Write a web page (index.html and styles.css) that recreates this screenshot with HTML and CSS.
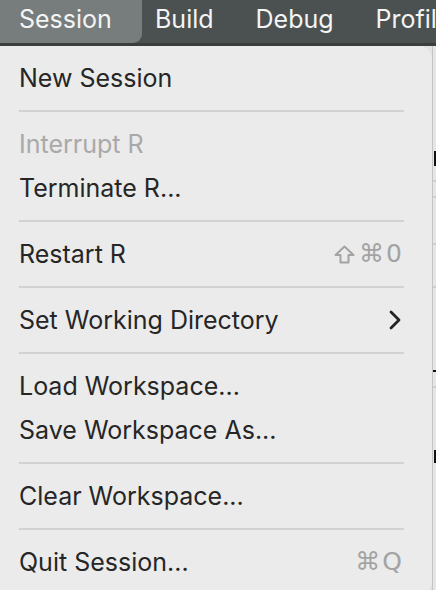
FILE: index.html
```html
<!DOCTYPE html>
<html lang="en">
<head>
  <meta charset="UTF-8">
  <meta name="viewport" content="width=device-width, initial-scale=1.0">
  <title>Session menu</title>
  <link rel="stylesheet" href="styles.css">
</head>
<body>

  <div class="menubar">
    <span class="title open">Session</span>
    <span class="title">Build</span>
    <span class="title">Debug</span>
    <span class="title">Profile</span>
  </div>

  <div class="screen">
    <div class="menu">
      <div class="item">New Session</div>
      <div class="sep"></div>
      <div class="item disabled">Interrupt R</div>
      <div class="item">Terminate R...</div>
      <div class="sep"></div>
      <div class="item">Restart R
        <span class="keys">
          <svg class="shift" width="21" height="19" viewBox="0 0 21 19"><polygon points="10.5,1.5 19.5,10 14.5,10 14.5,17.5 6.5,17.5 6.5,10 1.5,10" fill="none" stroke="#a3a3a3" stroke-width="2" stroke-linejoin="round"/></svg>⌘0
        </span>
      </div>
      <div class="sep"></div>
      <div class="item">Set Working Directory
        <svg class="chevron" width="12" height="20" viewBox="0 0 12 20"><polyline points="2,2 10,10 2,18" fill="none" stroke="#222" stroke-width="2.8" stroke-linecap="round" stroke-linejoin="round"/></svg>
      </div>
      <div class="sep"></div>
      <div class="item">Load Workspace...</div>
      <div class="item">Save Workspace As...</div>
      <div class="sep"></div>
      <div class="item">Clear Workspace...</div>
      <div class="sep"></div>
      <div class="item">Quit Session... <span class="keys">⌘Q</span></div>
    </div>

    <div class="behind">
      <div class="row r1"><span class="mark"></span></div>
      <div class="row r2"></div>
      <div class="row r3"></div>
      <div class="row r4"></div>
      <div class="row r5"><span class="mark cross"></span></div>
      <div class="row r6"><span class="mark"></span></div>
    </div>
  </div>

</body>
</html>
```

FILE: styles.css
```css
* {
  box-sizing: border-box;
}

body {
  margin: 0;
  width: 436px;
  height: 590px;
  overflow: hidden;
  font-family: Inter, "Noto Sans", sans-serif;
  background-color: #e2e2e2;
}

.menubar {
  height: 46px;
  display: flex;
  background-color: #4b5150;
  border-bottom: 3px solid #3a3e3d;
  color: #f4f4f4;
  font-size: 25px;
  white-space: nowrap;
  overflow: hidden;
}

.title {
  height: 43px;
  line-height: 38px;
  padding-right: 42px;
}

.title.open {
  width: 142px;
  flex-shrink: 0;
  padding-left: 19px;
  background-color: #777d7c;
  border-bottom-right-radius: 9px;
}

.title.open + .title {
  padding-left: 13px;
}

.screen {
  display: flex;
  height: 544px;
}

.menu {
  width: 432px;
  flex-shrink: 0;
  height: 548px;
  padding: 10px 28px 0 19px;
  background-color: #ebebeb;
  border-radius: 0 13px 13px 0;
  color: #262626;
  font-size: 25px;
  position: relative;
  z-index: 1;
}

.item {
  height: 44px;
  line-height: 44px;
  display: flex;
  justify-content: space-between;
  align-items: center;
  white-space: nowrap;
}

.disabled {
  color: #a9a9a9;
}

.keys {
  display: flex;
  align-items: center;
  gap: 4px;
  color: #a3a3a3;
  letter-spacing: 2px;
  font-family: "DejaVu Sans", Inter, sans-serif;
  font-size: 25px;
}

.chevron {
  margin-right: 3px;
}

.sep {
  height: 22px;
  display: flex;
  align-items: center;
}

.sep::before {
  content: "";
  flex: 1;
  height: 2px;
  background-color: #d2d2d2;
}

.behind {
  flex: 1;
  border-left: 1px solid #c4c4c4;
  background-color: #e6e6e6;
}

.row {
  border-bottom: 2px solid #d0d0d0;
  position: relative;
}

.r1 { height: 136px; }
.r2 { height: 16px; }
.r3 { height: 47px; }
.r4 { height: 43px; }
.r5 { height: 100px; }
.r6 { height: 150px; border-bottom: none; }

.mark {
  position: absolute;
  left: 1px;
  bottom: 14px;
  width: 3px;
  height: 15px;
  background-color: #111;
}

.mark.cross {
  height: 2px;
  bottom: 14px;
  left: 0;
}

.r6 .mark {
  top: 62px;
  bottom: auto;
  height: 13px;
}
```
